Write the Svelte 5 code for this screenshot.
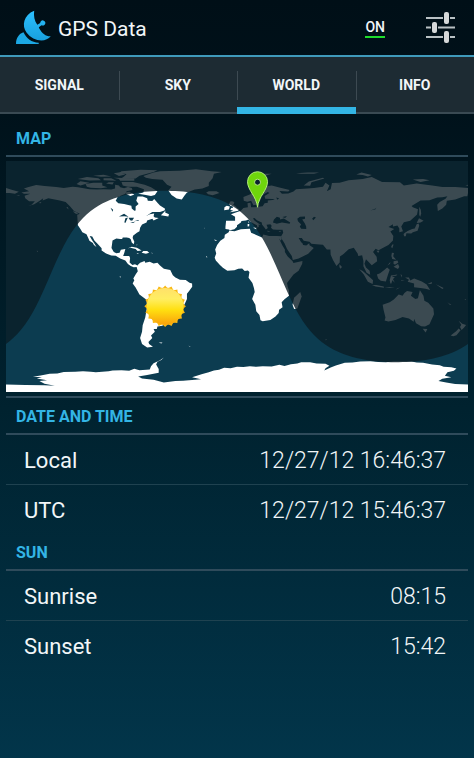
<script>
  const tabs = ['Signal', 'Sky', 'World', 'Info'];
  let active = $state('World');
  let gpsOn = $state(true);

  const sections = [
    {
      title: 'Date and time',
      rows: [
        ['Local', '12/27/12 16:46:37'],
        ['UTC', '12/27/12 15:46:37'],
      ],
    },
    {
      title: 'Sun',
      rows: [
        ['Sunrise', '08:15'],
        ['Sunset', '15:42'],
      ],
    },
  ];

  // Subsolar point and the user's position, in degrees.
  const sun = { lon: -56, lat: -23.2 };
  const place = { lon: 16, lat: 54 };

  // Coastlines as longitude,latitude pairs.
  const land = [
    // North America
    '-168,65.5 -162,66.5 -166,68.5 -163,69.5 -156.5,71.3 -150,70.5 -141,69.7 -135,69 -128,70 -124,69.5 -115,68 -109,67.8 -104,68 -98,67.8 -95,68.5 -95,71.5 -92,71 -91,69.5 -88,68.8 -85,69.8 -82,69 -81.5,67.5 -86,66.5 -87,64.5 -93,62 -94.5,59 -92.5,57 -88,56.5 -82.3,55.2 -82,53 -80,51.3 -79,51.5 -79,54.5 -76.7,56.5 -78.5,59 -77.5,62.4 -73.5,62.4 -70,61 -69.5,59 -66,58.8 -64.5,60.3 -62,57.5 -60,55.3 -56,52.8 -56.5,51.4 -60,50.2 -66,50.2 -69,48.4 -71,47 -68,48.6 -64.5,49 -65,47 -64,46 -61,45.5 -65,43.7 -66,45 -70,43.7 -70.5,42 -74,40.6 -75.5,38 -76,35.2 -78,34 -81,31.8 -81.3,30 -80,27 -80.5,25.2 -82,26.5 -82.8,29 -84,30 -86,30.4 -89,30.3 -89.5,29.2 -91,29.3 -94,29.6 -97,28 -97.4,25 -97.8,22.2 -96,19 -94,18.2 -91.5,18.6 -90.5,20.8 -87,21.5 -87.8,18.5 -88.7,16 -84,15.9 -83.3,14.5 -83.7,11 -81.5,9 -79.5,9.5 -77.5,8.5 -78,7.5 -80.5,7.3 -82.8,8.2 -85,9.8 -87,12.5 -91,14 -94.5,16.2 -98,16.3 -102,18 -105.5,20.3 -105.5,22 -108.5,25.3 -111,27.9 -112.8,31.2 -114.8,31.6 -113,28.5 -111,25.5 -109.5,23 -111.5,24.5 -112.3,26.2 -115,27.9 -116,30.2 -117.3,33 -120.5,34.5 -122,37 -124,40 -124.2,43 -124.5,48 -122.5,48.8 -127,51 -130,54.5 -133.5,58 -138,59.3 -142,60 -147,61 -151.5,59.3 -151,61 -154,58.8 -158,56.3 -163,54.7 -160,56 -157.5,58.6 -162,58.7 -165,61 -165.5,63 -161,64.5 -166,64.5',
    // South America
    '-77.5,8.7 -75.5,10.7 -72,12 -71.5,10.8 -68,11.5 -65,10.2 -62,10.7 -60,8.5 -57,6 -52,5 -50,1 -48,-0.7 -44.5,-2.5 -40,-2.8 -37,-4.8 -35,-5.5 -34.9,-8 -37,-11 -39,-13.5 -39,-17.5 -41,-22 -44,-23 -48.5,-26 -48.7,-28.5 -52,-32.5 -54,-34.5 -58,-34.2 -57,-36.3 -58,-38.3 -62,-39 -62.5,-41 -65,-41 -64,-43 -67,-46 -66,-48 -69,-51 -68.5,-52.5 -65.5,-54.8 -70,-55.3 -74,-52.5 -75.5,-48 -74,-43 -73.5,-38 -71.5,-32 -70.3,-25 -70.3,-18.3 -76,-14 -79,-8.5 -81.3,-5.5 -80,-3 -80.8,-1.5 -79,1.5 -77.3,4 -78.2,7.5',
    // Africa
    '-6,35.8 -2,35.2 3,36.8 10,37.3 11,34 15,32.4 19.5,30.3 20.5,32.7 25,31.6 31,31.5 34.3,31.4 34.8,29.5 34.2,27.8 32.6,29.9 35.5,24 37.3,21 37.3,19 39.5,15.5 43.2,12 44,10.5 51,12 50.8,10 48,4.5 44,1.5 41.5,-1.8 39,-5 39.5,-8 40.5,-11 40.5,-15 37,-17.8 34.8,-20 35.5,-24 32.8,-26 32.5,-28.5 30,-31.2 26,-33.8 20,-34.8 18.3,-34 17.5,-30 15,-27 14.3,-22 11.8,-17.5 13.8,-12 13.2,-9 12,-5 9,-1 9.7,3.5 8.5,4.6 6,4.3 4,6.3 1,6 -2,4.8 -7.5,4.4 -11,6.8 -13.3,9 -16.5,12.5 -17.4,14.7 -16.2,18 -17,21 -15.5,24.5 -13,27.8 -9.8,30 -9.5,32.5 -6.5,34.5',
    // Eurasia
    '-9,38.7 -9,37 -6.3,36.7 -5.5,36 -2,36.8 0,38.7 0,40 3,42 3.5,43.3 7,43.6 9,44.4 10.5,42.8 12.5,41.5 15.5,40 16,38 17,39 16.8,40.5 18.5,40.2 16,41.8 13.8,43.5 12.4,45.2 13.7,45.5 15.5,43.8 19.3,42 19.5,40.5 21.5,38 22.5,36.6 24,37.8 23,40.3 26,40.8 27,39.5 26.5,38 28,36.7 31,36.4 35.5,36.5 36,34 34.8,32 34.3,31.3 34.8,29.5 37,26 39,21.5 42.7,16 43.5,12.8 48,14 52,16 55.5,17.8 59.8,22.3 56.5,24.3 56.3,26 54,24.2 51.5,24.5 51,25.9 50,26.6 48,30 50.5,30 52,27.8 56.5,27 58,25.6 62,25.2 67,24.8 70,21 72.8,21 73,17 74.8,12.8 77.5,8.1 80,11 80.2,15.5 83,17.5 87,21.3 91,22.5 94,18 94.5,16 97.5,16.5 98.5,12 98.5,8 101,3 103.8,1.3 103.3,4.5 100.5,7 99.3,10 100.5,13.5 103,11 105,8.7 109.2,11.8 108.8,15.3 106,19 108,21.6 110.3,20.5 113.5,22.2 118,24.5 121.5,28 121.8,31.5 119.5,35 122.5,37 118,38.5 121.5,40.8 121.5,39 125,39.8 126.5,37.5 126.5,34.5 129.3,35.3 128,39 130,42.3 135,43.5 140.3,48.3 141,52.5 137,54 136,55 143,59.3 150,59.5 156,61.5 160,61.8 164,62.5 162.5,60.5 158,58 156,56 156.5,51 160,53 163,56 163.5,59 170,60 177,62.5 179.5,62.5 180,65 180,69 170,69.8 160,69.7 152,71 140,72.5 130,71 127,73.5 113,73.7 105,77.5 98,76 87,75 80,73 74,72.8 73,68 70,66.5 72,71 69,73 67,70 60,69 55,68.5 46,68 44,66.2 40,64.7 35,64.5 33,66.7 40,66.3 41,67.5 33,69.4 27,71 20,70 14,67.5 10.5,64 5,62 5.3,59 8,58.2 11,59 12.8,55.5 16,56.3 18.5,60 17.3,61.5 21.5,64.5 24,65.8 25.3,65 21.5,62.8 22,60.5 28,60.3 29.5,59.8 24,59.3 24,57.5 21.5,57 20,54.8 14,54 11,54 10.5,57.5 8.2,57 8.5,54 5,53.3 3,51.3 -1.5,49.6 -4.7,48.5 -1.5,46.5 -1.5,43.5 -8.5,43.5',
    // Greenland, Iceland, Svalbard and the Russian Arctic
    '-73,78.3 -65,81 -60,82 -45,82.5 -32,83.5 -20,82 -12,81.5 -18,80 -19,76.5 -22,73 -22,70.5 -27,68.5 -33,67.8 -39,65.5 -41,63 -43,60 -47,60.8 -51,63.5 -53.5,67 -51,70 -54.5,71.5 -58,75.3 -66,76 -71,77',
    '-24,65.5 -22,66.4 -16,66.4 -13.7,65 -19,63.4 -22.5,64',
    '11,79.5 18,80 27,80 22,78.5 17,76.6 13,78',
    '52,71 56,74 67,77 68,76.3 58,73.5 57,70.7',
    '46,80.5 55,81 64,81 60,80 50,80',
    '93,79.5 97,81 105,79 102,78 98,79',
    '137,75.5 145,76 150,75 143,73.7',
    '178,71 180,71.5 180,70.8',
    '-180,69 -175,67.5 -170,66 -173,64.4 -177,65 -180,65',
    '-172,63.6 -169,63.3 -170,63',
    // Canadian Arctic
    '-125,72 -122,74.3 -115,73 -122,71',
    '-117,70 -118,72 -112,73 -105,73 -105,71 -101,69.5 -106,68.8 -114,69.2',
    '-100,73.5 -96,73.5 -97,71.7 -102,72.5',
    '-90,73.7 -81,73.6 -77,72.7 -72,71.5 -67,69.5 -62,66.5 -64,63.5 -67,62.7 -71,63.5 -77,64.5 -73,65.5 -72.5,68 -78,70 -85,70 -89,71',
    '-87,65.5 -84,66 -80,63.8 -83,62.8 -86,64',
    '-124,76 -117,77.5 -108,76.5 -106,75 -115,74.8',
    '-104,76.5 -98,76.5 -94,74.7 -104,75',
    '-96,77 -80,76.5 -80,74.7 -91,74.6 -92,76',
    '-90,76.5 -79,76.3 -76,78.5 -65,81.5 -62,82.7 -75,83.1 -90,82 -92,80.5 -86,79.8 -88,78',
    '-96,80.5 -91,81.2 -87,79.5 -92,78.3',
    '-112,78.6 -104,79.3 -98,78 -106,77.8',
    // Atlantic islands and the Caribbean
    '-59.3,47.8 -55.7,51.5 -56,49.8 -53,48.5 -53.5,46.7',
    '-128,50.8 -125,50 -123.5,48.4 -126,49',
    '-133,54 -131.7,54 -131.3,52.3',
    '-85,22 -82,23.2 -78,22.4 -74.3,20.2 -77.5,19.9 -79,21.5 -83,22.4',
    '-74.3,18.5 -73,19.9 -70,19.8 -68.4,18.6 -71,17.7',
    '-78.3,18.4 -76.3,18.1 -77.5,17.8',
    '-67,18.5 -65.7,18.4 -66,18',
    '-78.2,25 -77.7,25 -78,24',
    '-61,-51.5 -58,-51.5 -59,-52.3',
    '-37.8,-54 -36,-54.5 -37,-54.6',
    '-91.5,0 -90.5,0 -91,-1',
    '-156,20.2 -155,19.6 -155.8,19',
    '-154.5,57.3 -152.3,58.3 -153,57',
    '-25.5,37.9 -25,37.6 -25.6,37.6',
    '-24,16 -23,15 -24,15',
    '-18,28.8 -16.3,28.5 -15.4,28 -17,27.8',
    // Europe's islands
    '-5.7,50 -3,51.4 -5.2,51.8 -4.5,53.3 -3,53.5 -3.5,54.8 -5,55 -6.2,56.7 -5,58.6 -3,58.5 -2,57.5 -3,56 -1.5,55 0.3,53 1.7,52.6 1,51.2 -3,50.4',
    '-10,51.7 -9.8,54 -8,55.2 -5.6,54.5 -6.3,52.2',
    '8.3,39 8.3,41 9.6,41 9.5,39.2',
    '8.7,42.4 9.4,43 9.4,41.5',
    '12.5,38 15.5,38.2 15.2,36.8',
    '23.5,35.6 26.2,35.2 24,34.9',
    '32.4,35 34.5,35.6 33.5,34.6',
    // Indian Ocean
    '49.3,-12 50.4,-15.5 47,-25 44.5,-25.3 43.3,-22 44.5,-16.5',
    '79.8,9.5 81.8,7.5 80.5,6 79.8,7.5',
    '69,-48.8 70.3,-49.3 69,-49.6',
    // East Asia
    '142,54.3 143.2,52 143.5,49 142.8,46.5 142,48 142,51.5',
    '140,41.6 141.8,45.4 145.4,43.4 143,42',
    '130.9,34 133,35.5 136.5,37 138.5,37.5 140,40.8 141.5,41.3 142,39.5 140.7,35.6 137,34.5 135.8,33.5 132,33.7 131.5,31.4 130.2,31.3 129.8,33.2',
    '121,25 122,25 121,22 120.1,23',
    '108.7,20 111,20 110,18.3',
    '120.3,16 120.7,18.5 122.3,18.4 121.7,15.8 124,13 121,13.7',
    '122,11.8 125,12.4 125.7,11 123,9.2 122,10.4',
    '122,7.6 125.5,9.8 126.5,7.5 125.4,5.8',
    '117.2,8.5 119.5,11.3 119.3,10',
    // Indonesia and Oceania
    '95.3,5.6 98,4.2 103.5,-0.5 106,-3 105.7,-5.9 102,-4 98.8,1.5',
    '105.2,-6.7 108.5,-6.6 114.3,-7.7 114.5,-8.7 108,-7.8',
    '115,-8.2 119,-8.3 123,-8.3 119,-9',
    '123.7,-10.3 127,-8.5 125,-9.2',
    '109,1.5 111.5,2.5 115,5.2 117,7 119,5.2 117.5,1 116,-3.8 112,-3.4 110,-1.5',
    '119.5,-5.5 119,-3 120,0.8 125,1.5 124,0.5 120.5,0.3 123,-0.8 121.5,-2 123,-4.8 121,-3 120.3,-5.5',
    '127.5,2 128.5,1 128,-0.8',
    '128,-3 130.8,-3.5 128,-3.5',
    '131,-0.8 134,-0.8 135,-3.2 138,-1.6 144,-3.8 147.8,-6.3 150.5,-10.5 147,-9.5 143,-9 138,-8.3 138,-5.5 133,-4 134,-2.6',
    '148.5,-5.6 152,-4.3 151.5,-5.8',
    '155,-6 161,-9 160,-9.8',
    '164,-20 167,-22.2 166,-22.2',
    '177.3,-17.6 178.6,-17.8 178,-18.3',
    '113.5,-22 114.2,-26 115.7,-32 115,-34.2 118,-35 123.5,-33.8 129,-31.6 134,-32.8 137.7,-35.3 138,-33 139.5,-36.5 143.5,-38.8 146.5,-39 150,-37.3 153.5,-29.5 153,-25 149,-20.5 146,-18.8 145.3,-15 142.5,-10.8 141,-17 139,-17.5 135.5,-15 136.8,-12 132.5,-11.3 130.5,-12.8 129,-15 126,-14 122.2,-18 119,-20',
    '144.7,-40.8 148.3,-41 147,-43.6',
    '172.7,-34.5 175.5,-36.8 178.5,-37.8 176.8,-40 175,-41.6 173.8,-39.3 174.8,-37.5',
    '172.7,-40.6 174.2,-41.8 171,-45.8 168.5,-46.6 166.5,-46 171,-42.5',
    // Antarctica
    '-180,-84.2 -165,-84.5 -150,-84.8 -142,-85.2 -150,-83.5 -154,-81.5 -148,-80.8 -156,-79.4 -152,-78.6 -159,-78.2 -153,-77.2 -146,-75.7 -140,-75.6 -135,-74.5 -126,-74.3 -120,-73.8 -114,-74.3 -110,-74.6 -100,-73.8 -97,-73.2 -90,-73 -84,-73.4 -80,-71.8 -76,-73 -68,-72.5 -67,-70 -65,-67.5 -60,-65.2 -57,-63.2 -59,-65 -62,-66.5 -63,-68.5 -61,-72 -61,-75 -70,-76.8 -77,-78 -74,-79.4 -65,-80.5 -57,-82.5 -48,-81.4 -42,-81.2 -28,-80 -35,-78.6 -27,-76 -22,-74.6 -18,-73.2 -14,-72.6 -10,-71.2 -5,-71.4 0,-70.3 5,-70.6 10,-70 15,-70.4 20,-70 27,-70.2 33,-68.7 37,-69.7 42,-68.3 47,-67.8 50,-66.8 57,-66.9 62,-67.7 69,-68 72,-69.5 69,-71.5 68,-73.2 73,-71 77,-69.3 84,-67.2 90,-67 96,-66.3 104,-66 110,-66.6 116,-66.8 122,-66.3 130,-66.2 136,-66.2 140,-67 145,-67.2 152,-68.6 158,-69.2 161,-70.4 167,-70.8 171,-71.7 169,-73.5 164,-74.7 162,-77.4 167,-78.6 160,-79.6 157,-81.5 163,-82.5 170,-83.8 180,-84.2 180,-90 -180,-90',
  ];

  const water = [
    // Great Lakes
    '-92,46.8 -88,48.8 -84.5,46.6 -88,47',
    '-87.8,42 -87,45.3 -85,45.9 -86.2,43.5 -86.8,41.8',
    '-84.5,45.8 -80.2,45.8 -81.7,43.4 -83.3,43.8',
    '-83.3,41.8 -79,42.8 -81,41.7',
    '-79.6,43.5 -76.3,44.1 -77,43.3',
    '-98.5,53.5 -97,50.5 -96.5,52',
    // Black Sea, Azov, Caspian, Aral and Baikal
    '28,42 28.8,44.5 31,46.5 33.5,45.8 33.5,44.5 36.5,45.2 41.5,42 41,41.1 35,42 31,41.2',
    '35.3,46.3 39,47.1 37.5,45.5',
    '47,45 49,46.5 53,46.7 53,45 50.8,44.5 52.8,41.5 53.9,39 54,37 50,37.3 48.9,39 50,40.5 47.5,43',
    '58.5,45 60,46.6 61.5,46 59.5,43.8',
    '104,51.5 108.5,53.2 109.8,55.5 108,52.5',
    // Ladoga
    '30.5,61.5 32.8,61 31.5,59.9',
  ];

  // Day/night boundary for the given subsolar point.
  const rad = Math.PI / 180;
  const edge = [];
  for (let lon = -180; lon <= 180; lon += 3) {
    const lat = Math.atan(-Math.cos((lon - sun.lon) * rad) / Math.tan(sun.lat * rad)) / rad;
    edge.push(`${lon},${lat.toFixed(2)}`);
  }
  const night = `-180,90 ${edge.join(' ')} 180,90`;

  // Spiked rim of the sun marker.
  const rim = Array.from({ length: 80 }, (_, i) => {
    const a = (i * 4.5 - 90) * rad;
    const r = [20.8, 19.2, 18.4, 19.2][i % 4];
    return `${(r * Math.cos(a)).toFixed(2)},${(r * Math.sin(a)).toFixed(2)}`;
  }).join(' ');
</script>

<div class="screen">
  <header>
    <svg class="logo" viewBox="16 11 36 35" aria-hidden="true">
      <defs>
        <linearGradient id="dish" x1="0" y1="0" x2="0" y2="1">
          <stop offset="0" stop-color="#2cc0ff" />
          <stop offset="1" stop-color="#18a0de" />
        </linearGradient>
      </defs>
      <path fill="url(#dish)" d="M34.200 11.800C23.500 16 21.500 27 26.500 33.500c6.500 9 19 10.500 24.300 3.800C46 37.600 42.500 35 39.300 29.500L38.800 28.200 41.500 26.200A2.600 2.600 0 1 0 40.200 24L37.300 25.700C34.500 22 33.400 17 34.200 11.800z" />
      <path fill="#1ca8e4" d="M16 45c0-6 3-10.500 7.500-11.800C26.500 39.500 31.500 43.300 38.700 43.700V45z" />
    </svg>
    <h1>GPS Data</h1>
    <button class="power" aria-pressed={gpsOn} onclick={() => (gpsOn = !gpsOn)}>{gpsOn ? 'ON' : 'OFF'}</button>
    <button class="settings" aria-label="Settings">
      <svg viewBox="0 0 30 32" aria-hidden="true">
        <path stroke="#b9c1c4" stroke-width="2" d="M0 6h17M24 6h5M0 15.500h5M12 15.500h17M0 25h17M24 25h5" />
        <g fill="#d5d8d9">
          <rect x="18" y="0" width="5" height="12" rx="2" />
          <rect x="6" y="10" width="5" height="11" rx="2" />
          <rect x="18" y="19" width="5" height="12" rx="2" />
        </g>
      </svg>
    </button>
  </header>

  <nav>
    {#each tabs as tab}
      <button class:active={tab === active} aria-current={tab === active ? 'page' : undefined} onclick={() => (active = tab)}>
        <span>{tab}</span>
      </button>
    {/each}
  </nav>

  <main>
    <section class="map">
      <h2>Map</h2>
      <svg viewBox="-180 -90 360 180" role="img" aria-label="World map with day and night">
        <defs>
          <linearGradient id="glow" x1="0" y1="0" x2="0" y2="1">
            <stop offset="0" stop-color="#ffe06a" />
            <stop offset="0.300" stop-color="#ffee62" />
            <stop offset="0.600" stop-color="#ffdf10" />
            <stop offset="1" stop-color="#f9a00c" />
          </linearGradient>
        </defs>
        <rect x="-180" y="-90" width="360" height="180" fill="#0c3c50" />
        <g transform="scale(1 -1)">
          {#each land as points}
            <polygon {points} fill="#fff" />
          {/each}
          {#each water as points}
            <polygon {points} fill="#0c3c50" />
          {/each}
          <polygon points={night} fill="#0a1d26" fill-opacity="0.8" />
        </g>
        <g transform="translate({sun.lon} {-sun.lat}) scale(0.779)">
          <polygon points={rim} fill="#f9b814" />
          <circle r="18.400" fill="url(#glow)" />
        </g>
        <g transform="translate({place.lon} {-place.lat}) scale(0.779)">
          <path fill="#6fd60c" stroke="#b4ec7c" d="M0 0C-1-11-10-17-10-25.500a10 10 0 0 1 20 0C10-17 1-11 0 0z" />
          <circle cy="-25" r="3" fill="#0b242e" stroke="#b4ec7c" />
        </g>
      </svg>
    </section>

    {#each sections as section}
      <section>
        <h2>{section.title}</h2>
        <dl>
          {#each section.rows as [name, value]}
            <div>
              <dt>{name}</dt>
              <dd>{value}</dd>
            </div>
          {/each}
        </dl>
      </section>
    {/each}
  </main>
</div>

<style>
  :global(body) {
    background: #02354a;
  }
  .screen {
    min-height: 100vh;
    box-sizing: border-box;
    background: linear-gradient(#000f17, #00121b 15%, #00222f 54%, #02354a);
    color: #f2f6f8;
    font-family: Roboto, 'Liberation Sans', sans-serif;
  }
  button {
    border: 0;
    padding: 0;
    background: none;
    color: inherit;
    font: inherit;
    cursor: pointer;
  }
  header {
    display: flex;
    align-items: center;
    height: 55px;
    padding: 0 18px 0 16px;
    border-bottom: 2px solid #3f9abb;
  }
  .logo {
    width: 36px;
    height: 35px;
  }
  h1 {
    flex: 1;
    margin: 0 0 0 6px;
    padding-top: 3px;
    font-size: 21px;
    font-weight: 400;
  }
  .power {
    margin-right: 41px;
    border-bottom: 2px solid #1fdc2c;
    font-size: 14px;
    font-weight: 500;
    line-height: 18px;
  }
  .settings svg {
    display: block;
    width: 30px;
    height: 32px;
  }
  nav {
    display: flex;
    height: 57px;
    background: #1d2b33;
    box-shadow: inset 0 -2px #3a4a53;
  }
  nav button {
    flex: 1;
    display: flex;
    padding: 14px 0;
    box-sizing: border-box;
    font-size: 14px;
    font-weight: 700;
    text-transform: uppercase;
  }
  nav span {
    flex: 1;
    align-self: stretch;
    line-height: 29px;
  }
  nav button + button span {
    box-shadow: inset 1px 0 #3d4a52;
  }
  nav .active {
    box-shadow: inset 0 -7px #33b5e5;
  }
  main {
    padding: 6px 6px 0;
  }
  h2 {
    margin: 0;
    padding: 2px 10px 0;
    border-bottom: 2px solid #2f4b5b;
    color: #33b5e5;
    font-size: 16px;
    font-weight: 700;
    line-height: 33px;
    padding-top: 2px;
    text-transform: uppercase;
  }
  .map {
    border-bottom: 2px solid #2f4b5b;
  }
  .map svg {
    display: block;
    width: 100%;
    padding: 4px 0;
  }
  dl {
    margin: 0;
  }
  dl div {
    display: flex;
    justify-content: space-between;
    padding: 0 22px 0 18px;
    font-size: 22px;
  }
  dl div + div {
    border-top: 1px solid #1f4250;
  }
  dt {
    padding-top: 2px;
    line-height: 47px;
  }
  dd {
    margin: 0;
    padding-top: 2px;
    font-size: 23px;
    font-weight: 300;
    line-height: 47px;
  }
</style>
